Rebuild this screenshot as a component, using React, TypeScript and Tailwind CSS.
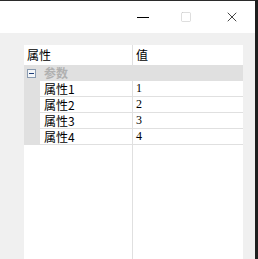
import { Square, X } from "lucide-react";

const rows = [
  { name: "属性1", value: "1" },
  { name: "属性2", value: "2" },
  { name: "属性3", value: "3" },
  { name: "属性4", value: "4" },
];

export default function App() {
  return (
    <div
      className="w-[258px] h-[259px] flex overflow-hidden text-[12px] text-black"
      style={{ fontFamily: '"Noto Sans CJK SC", "Liberation Serif", serif' }}
    >
      <div className="flex-1 flex flex-col">
        {/* title bar */}
        <div className="h-[33px] bg-white border-t border-[#2b2b2b] flex items-center justify-end">
          <div className="w-[46px] h-full flex items-center justify-center pl-[6px]">
            <div className="w-[12px] h-[1px] bg-black" />
          </div>
          <div className="w-[46px] h-full flex items-center justify-center">
            <Square className="w-[12px] h-[12px] text-[#c8c8c8]" strokeWidth={1.2} />
          </div>
          <div className="w-[46px] h-full flex items-center justify-center">
            <X className="w-[16px] h-[16px] text-black" strokeWidth={1.1} />
          </div>
        </div>

        {/* body */}
        <div className="flex-1 bg-[#f0f0f0] pt-[12px] pl-[24px] pr-[12px] flex flex-col">
          <div className="flex-1 bg-white flex flex-col">
            {/* header */}
            <div className="h-[20px] flex">
              <div className="w-[109px] border-r border-[#e0e0e0] pl-[3px] leading-[20px]">属性</div>
              <div className="flex-1 pl-[3px] leading-[20px]">值</div>
            </div>

            {/* category */}
            <div className="h-[16px] bg-[#e0e0e0] flex items-center">
              <div className="ml-[3px] w-[9px] h-[9px] border border-[#8a9bb0] bg-[#f4f6f8] flex items-center justify-center">
                <div className="w-[5px] h-[1px] bg-[#1f3f7a]" />
              </div>
              <span className="ml-[8px] font-bold text-[#b0b0b0] leading-[16px]">参数</span>
            </div>

            {/* properties */}
            {rows.map((r) => (
              <div key={r.name} className="h-[16px] flex">
                <div className="w-[16px] bg-[#e0e0e0]" />
                <div className="w-[93px] border-r border-b border-[#e0e0e0] pl-[4px] leading-[15px]">
                  {r.name}
                </div>
                <div
                  className="flex-1 border-b border-[#e0e0e0] pl-[3px] leading-[15px]"
                  style={{ fontFamily: '"Liberation Serif", serif' }}
                >
                  {r.value}
                </div>
              </div>
            ))}

            {/* empty area */}
            <div className="flex-1 flex">
              <div className="w-[109px] border-r border-[#e0e0e0]" />
              <div className="flex-1" />
            </div>
          </div>
        </div>
      </div>
      <div className="w-[3px] bg-[#1e1e1e]" />
    </div>
  );
}
